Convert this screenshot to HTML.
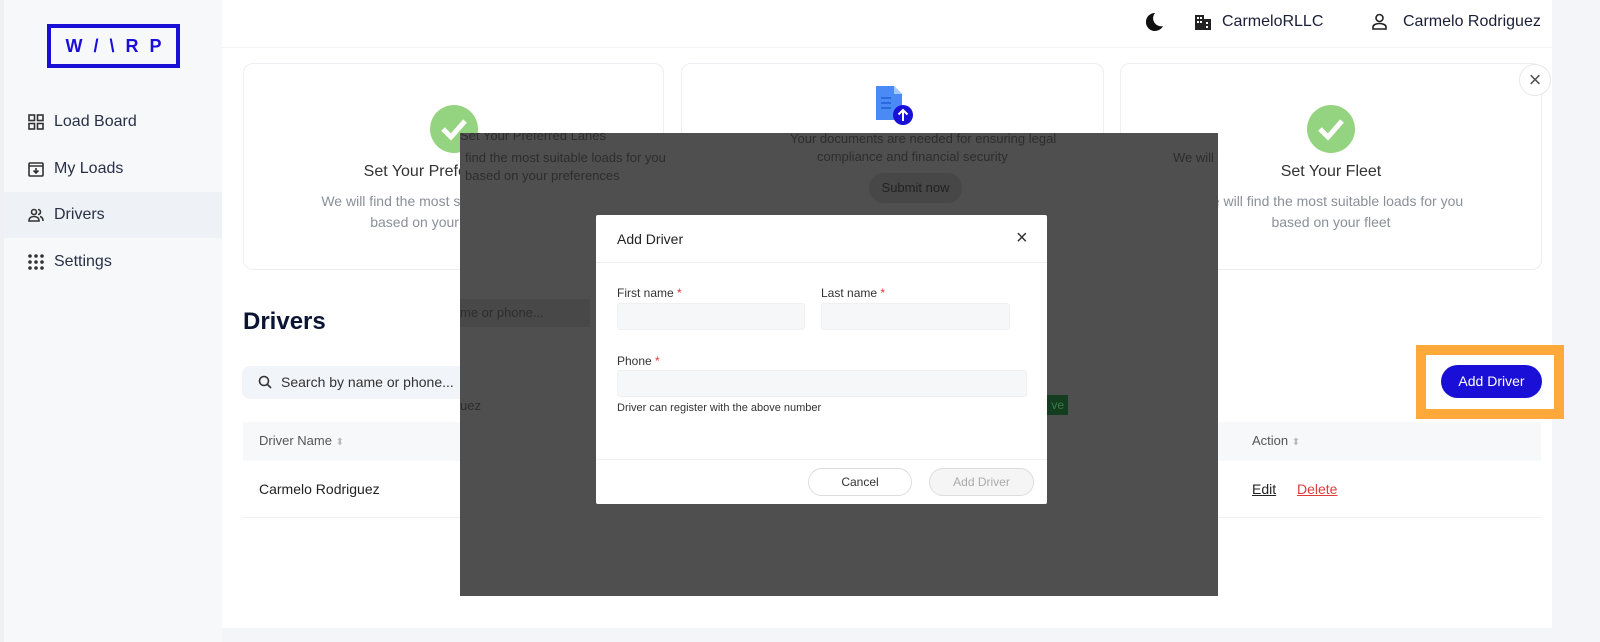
<!DOCTYPE html><html><head><style>
*{box-sizing:border-box;margin:0;padding:0}
body{width:1600px;height:642px;overflow:hidden;background:#fff;font-family:"Liberation Sans",sans-serif;position:relative;color:#1a1f36}
.a{position:absolute}
.side{left:0;top:0;width:222px;height:642px;background:#f7f8fa;border-left:4px solid #eef0f3}
.nav{left:4px;width:218px;height:46px;font-size:16px;color:#283046;display:flex;align-items:center;padding-left:50px}
.card{border:1px solid #eceef1;border-radius:10px;background:#fff}
.ct{font-size:16px;color:#333;text-align:center;width:100%}
.cs{font-size:14px;color:#8a8f98;text-align:center;width:100%;line-height:21px}
.chk{width:48px;height:48px;border-radius:50%;background:#94d37f}
.ov{left:460px;top:133px;width:758px;height:463px;background:#4f4f4f;overflow:hidden}
.dim{color:#2d2d2d;font-size:13px;white-space:nowrap}
.modal{left:596px;top:215px;width:451px;height:289px;background:#fff;border-radius:2px}
.lbl{font-size:12px;color:#333}
.lbl b{color:#e33;font-weight:normal}
.inp{background:#f6f7f9;border:1px solid #eef0f2;border-radius:3px;height:27px}
</style></head><body>
<div class="a side"></div>
<div class="a" style="left:47px;top:24px;width:133px;height:44px;border:4px solid #1a0fd6;color:#1a0fd6;font-weight:bold;font-size:18px;letter-spacing:11px;padding-left:11px;text-align:center;line-height:36px">W/\RP</div>
<div class="a nav" style="top:99px"><svg class="a" style="left:24px" width="16" height="16" viewBox="0 0 16 16" fill="none" stroke="#333" stroke-width="1.6"><rect x="1" y="1" width="5.5" height="5.5"/><rect x="9.5" y="1" width="5.5" height="5.5"/><rect x="1" y="9.5" width="5.5" height="5.5"/><rect x="9.5" y="9.5" width="5.5" height="5.5"/></svg>Load Board</div>
<div class="a nav" style="top:146px"><svg class="a" style="left:24px" width="16" height="16" viewBox="0 0 16 16" fill="none" stroke="#333" stroke-width="1.6"><rect x="1" y="2" width="14" height="13" rx="1"/><path d="M1 5h14M8 7v5M5.5 9.5L8 12l2.5-2.5"/></svg>My Loads</div>
<div class="a nav" style="top:192px;background:#eef1f5"><svg class="a" style="left:24px" width="16" height="14" viewBox="0 0 16 14" fill="none" stroke="#333" stroke-width="1.6"><circle cx="6" cy="4" r="2.5"/><path d="M1 13c0-3 2-4.5 5-4.5s5 1.5 5 4.5zM10 1.5a2.5 2.5 0 0 1 0 5M12 8.5c2 .5 3 2 3 4.5"/></svg>Drivers</div>
<div class="a nav" style="top:239px"><svg class="a" style="left:24px" width="16" height="16" viewBox="0 0 16 16" fill="#333"><circle cx="2" cy="2" r="1.8"/><circle cx="8" cy="2" r="1.8"/><circle cx="14" cy="2" r="1.8"/><circle cx="2" cy="8" r="1.8"/><circle cx="8" cy="8" r="1.8"/><circle cx="14" cy="8" r="1.8"/><circle cx="2" cy="14" r="1.8"/><circle cx="8" cy="14" r="1.8"/><circle cx="14" cy="14" r="1.8"/></svg>Settings</div>
<div class="a" style="left:222px;top:47px;width:1330px;height:1px;background:#f3f4f6"></div>
<div class="a" style="left:1552px;top:0;width:48px;height:642px;background:#f3f5f8"></div>
<div class="a" style="left:222px;top:628px;width:1378px;height:14px;background:#f3f5f8"></div>
<svg class="a" style="left:1143px;top:11px" width="22" height="22" viewBox="0 0 22 22"><path d="M12 2a9 9 0 1 0 8 13A8 8 0 0 1 12 2z" fill="#111"/></svg>
<svg class="a" style="left:1195px;top:15px" width="16" height="15" viewBox="0 0 16 15" fill="#222"><rect x="0" y="0" width="9" height="15"/><rect x="9" y="4" width="7" height="11"/><g fill="#fff"><rect x="2" y="2" width="2" height="2"/><rect x="5" y="2" width="2" height="2"/><rect x="2" y="6" width="2" height="2"/><rect x="5" y="6" width="2" height="2"/><rect x="11" y="7" width="2" height="2"/><rect x="11" y="11" width="2" height="2"/></g></svg>
<div class="a" style="left:1222px;top:13px;font-size:16px;color:#1a1f36">CarmeloRLLC</div>
<svg class="a" style="left:1371px;top:13px" width="17" height="17" viewBox="0 0 17 17" fill="none" stroke="#222" stroke-width="1.6"><circle cx="8.5" cy="5" r="3.5"/><path d="M2 16v-2c0-2 3-3.5 6.5-3.5S15 12 15 14v2z"/></svg>
<div class="a" style="left:1403px;top:13px;font-size:16px;color:#1a1f36">Carmelo Rodriguez</div>
<div class="a card" style="left:243px;top:63px;width:421px;height:207px"><div class="a chk" style="left:186px;top:41px"></div><svg class="a" style="left:196px;top:53px" width="28" height="24"><path d="M3 12l8 8L25 4" stroke="#fff" stroke-width="5" fill="none"/></svg><div class="a ct" style="top:99px">Set Your Preferred Lanes</div><div class="a cs" style="top:127px">We will find the most suitable loads for you<br>based on your preferences</div></div>
<div class="a card" style="left:681px;top:63px;width:423px;height:154px"><svg class="a" style="left:192px;top:20px" width="40" height="42"><path d="M2 2h18l8 8v26H2z" fill="#4a8af4"/><path d="M20 2v8h8" fill="#a6c6fa"/><path d="M7 14h10M7 19h10M7 24h10" stroke="#2a6ae0" stroke-width="2"/><circle cx="29" cy="31" r="10" fill="#1a0fd6"/><path d="M29 37v-11M24.5 30.5L29 26l4.5 4.5" stroke="#fff" stroke-width="2" fill="none"/></svg></div>
<div class="a card" style="left:1120px;top:63px;width:422px;height:207px"><div class="a chk" style="left:186px;top:41px"></div><svg class="a" style="left:196px;top:53px" width="28" height="24"><path d="M3 12l8 8L25 4" stroke="#fff" stroke-width="5" fill="none"/></svg><div class="a ct" style="top:99px">Set Your Fleet</div><div class="a cs" style="top:127px">We will find the most suitable loads for you<br>based on your fleet</div></div>
<div class="a" style="left:1519px;top:64px;width:32px;height:32px;border-radius:50%;border:1px solid #e6e8eb;background:#fff;text-align:center;line-height:30px;font-size:22px;color:#555">×</div>
<div class="a" style="left:243px;top:308px;font-size:24px;font-weight:bold;color:#0b1533">Drivers</div>
<div class="a" style="left:242px;top:366px;width:230px;height:33px;background:#f1f4f8;border-radius:8px"></div>
<svg class="a" style="left:258px;top:375px" width="14" height="14" fill="none" stroke="#333" stroke-width="1.6"><circle cx="6" cy="6" r="4.5"/><path d="M9.5 9.5L13 13"/></svg>
<div class="a" style="left:281px;top:374px;font-size:14px;color:#333">Search by name or phone...</div>
<div class="a" style="left:243px;top:422px;width:1298px;height:39px;background:#f7f8fa"></div>
<div class="a" style="left:259px;top:433px;font-size:13px;color:#555">Driver Name <span style="color:#bbb;font-size:10px">⬍</span></div>
<div class="a" style="left:1252px;top:433px;font-size:13px;color:#555">Action <span style="color:#bbb;font-size:10px">⬍</span></div>
<div class="a" style="left:259px;top:481px;font-size:14px;color:#222">Carmelo Rodriguez</div>
<div class="a" style="left:1252px;top:481px;font-size:14px;color:#222;text-decoration:underline">Edit</div>
<div class="a" style="left:1297px;top:481px;font-size:14px;color:#e23b3b;text-decoration:underline">Delete</div>
<div class="a" style="left:243px;top:517px;width:1298px;height:1px;background:#eef0f2"></div>
<div class="a" style="left:1416px;top:345px;width:148px;height:74px;border:10px solid #ffa93a;background:#fff"></div>
<div class="a" style="left:1441px;top:365px;width:101px;height:33px;border-radius:17px;background:#1a0fd6;color:#fff;font-size:14px;text-align:center;line-height:33px">Add Driver</div>
<div class="a ov">
<div class="a dim" style="left:0;top:-5px;font-size:13px">Set Your Preferred Lanes</div>
<div class="a dim" style="left:5px;top:17px">find the most suitable loads for you</div>
<div class="a dim" style="left:5px;top:35px">based on your preferences</div>
<div class="a dim" style="left:330px;top:-2px">Your documents are needed for ensuring legal</div>
<div class="a dim" style="left:357px;top:16px">compliance and financial security</div>
<div class="a" style="left:409px;top:40px;width:93px;height:30px;border-radius:15px;background:#474747;color:#222;font-size:13px;text-align:center;line-height:30px">Submit now</div>
<div class="a dim" style="left:713px;top:17px">We will f</div>
<div class="a" style="left:0;top:166px;width:130px;height:28px;background:#484848"></div>
<div class="a dim" style="left:0;top:172px">me or phone...</div>
<div class="a dim" style="left:0;top:265px">uez</div>
<div class="a" style="left:575px;top:262px;width:33px;height:20px;background:#143d1f;font-size:12px;line-height:20px;text-align:right;padding-right:4px;color:#3b7a48">ve</div>
</div>
<div class="a modal">
<div class="a" style="left:21px;top:16px;font-size:14px;color:#222">Add Driver</div>
<div class="a" style="left:420px;top:12px;font-size:20px;color:#333">×</div>
<div class="a" style="left:0;top:47px;width:451px;height:1px;background:#eee"></div>
<div class="a lbl" style="left:21px;top:71px">First name <b>*</b></div>
<div class="a lbl" style="left:225px;top:71px">Last name <b>*</b></div>
<div class="a inp" style="left:21px;top:88px;width:188px"></div>
<div class="a inp" style="left:225px;top:88px;width:189px"></div>
<div class="a lbl" style="left:21px;top:139px">Phone <b>*</b></div>
<div class="a inp" style="left:21px;top:155px;width:410px"></div>
<div class="a" style="left:21px;top:187px;font-size:11px;color:#333">Driver can register with the above number</div>
<div class="a" style="left:0;top:244px;width:451px;height:1px;background:#f0f0f0"></div>
<div class="a" style="left:212px;top:253px;width:104px;height:28px;border:1px solid #ddd;border-radius:14px;font-size:12px;color:#333;text-align:center;line-height:26px">Cancel</div>
<div class="a" style="left:333px;top:253px;width:105px;height:28px;border:1px solid #ddd;border-radius:14px;background:#f5f5f5;font-size:12px;color:#aaa;text-align:center;line-height:26px">Add Driver</div>
</div>
</body></html>
